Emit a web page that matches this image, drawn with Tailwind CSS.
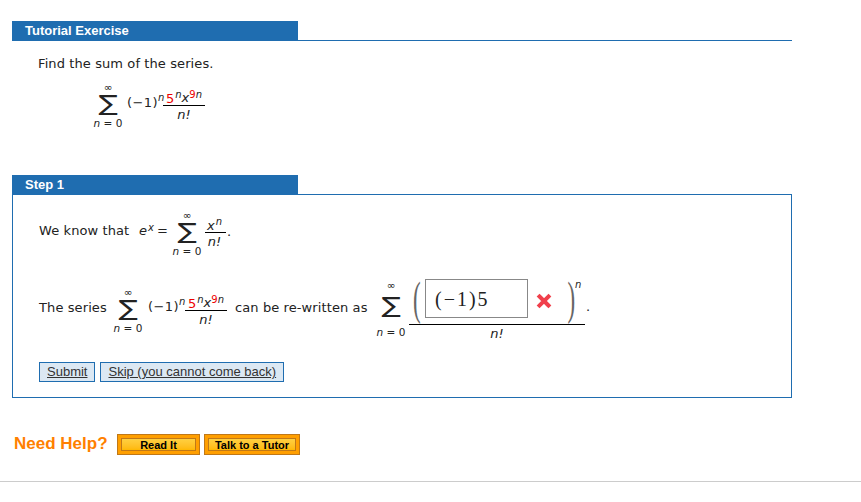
<!DOCTYPE html>
<html>
<head>
<meta charset="utf-8">
<script src="https://cdn.jsdelivr.net/npm/@tailwindcss/browser@4"></script>
</head>
<body class="bg-white w-[861px] h-[502px] overflow-hidden font-['DejaVu_Sans',sans-serif] text-[13px] text-[#222]">
<div class="h-[482px] border-b border-[#ccc] pt-[21px] pl-[12px] pr-[69px]">
  <div class="border-b border-[#1f6db0] h-[20px]">
    <div class="w-[286px] h-[20px] bg-[#1f6db0] pl-[13px] font-['Liberation_Sans',sans-serif] font-bold text-white text-[13px] leading-[20px]">Tutorial Exercise</div>
  </div>

  <div class="pl-[26px] pt-[15px] leading-[16px] tracking-[0.1px]">Find the sum of the series.</div>

  <div class="flex items-start pl-[79px] pt-[10px] h-[103px]">
    <div class="flex flex-col items-center w-[34px] text-[10.5px] leading-[10px]">
      <span class="h-[10px]">∞</span>
      <span class="text-[22px] leading-[23px] h-[22px] scale-x-[1.3]">∑</span>
      <span class="mt-[4px] h-[10px]"><i>n</i> = 0</span>
    </div>
    <span class="ml-[2px] mt-[13px] w-[31px] text-[13px] leading-[16px] tracking-[0.4px] whitespace-nowrap">(−1)</span><i class="mt-[11px] w-[6px] text-[10px] leading-[10px]">n</i>
    <div class="flex flex-col items-center w-[42px] -ml-px mt-[8px]">
      <div class="border-b border-black w-full flex justify-center items-start h-[16px] text-[13px] leading-[14px]"><span class="text-[#e00] mt-[2px]">5</span><i class="text-[10px] leading-[10px] ml-[1px]">n</i><i class="mt-[1px]">x</i><span class="text-[10px] leading-[10px] text-[#e00]">9</span><i class="text-[10px] leading-[10px]">n</i></div>
      <i class="text-[13px] leading-[18px]">n!</i>
    </div>
  </div>

  <div class="h-[20px]">
    <div class="w-[286px] h-[20px] bg-[#1f6db0] pl-[13px] font-['Liberation_Sans',sans-serif] font-bold text-white text-[13px] leading-[20px]">Step 1</div>
  </div>
  <div class="border border-[#1f6db0] -mt-px h-[204px] pl-[26px] pt-[15px]">
    <div class="flex items-start h-[70px]">
      <span class="mt-[13px] w-[100px] leading-[16px] tracking-[0.1px] whitespace-nowrap">We know that</span>
      <span class="mt-[13px] w-[31px] leading-[16px] whitespace-nowrap flex items-start"><i>e</i><i class="text-[10px] leading-[10px] ml-px">x</i><span class="ml-[3px]">=</span></span>
      <div class="flex flex-col items-center w-[34px] text-[10.5px] leading-[10px]">
        <span class="h-[10px]">∞</span>
        <span class="text-[22px] leading-[23px] h-[22px] scale-x-[1.3]">∑</span>
        <span class="mt-[4px] h-[10px]"><i>n</i> = 0</span>
      </div>
      <div class="flex flex-col items-center w-[21px] ml-[1px] mt-[7px]">
        <div class="border-b border-black w-full flex justify-center items-start h-[16px] text-[13px] leading-[14px] pr-[2px]"><i class="mt-[2px]">x</i><i class="text-[10px] leading-[10px] ml-px">n</i></div>
        <i class="text-[13px] leading-[18px] pr-[2px]">n!</i>
      </div>
      <span class="mt-[15px] ml-[1px] leading-[14px]">.</span>
    </div>

    <div class="flex items-start h-[82px]">
      <span class="mt-[20px] w-[72px] leading-[16px] tracking-[0.1px] whitespace-nowrap">The series</span>
      <div class="flex flex-col items-center w-[34px] mt-[7px] text-[10.5px] leading-[10px]">
        <span class="h-[10px]">∞</span>
        <span class="text-[22px] leading-[23px] h-[22px] scale-x-[1.3]">∑</span>
        <span class="mt-[4px] h-[10px]"><i>n</i> = 0</span>
      </div>
      <span class="ml-[3px] mt-[19px] w-[31px] text-[13px] leading-[16px] tracking-[0.4px] whitespace-nowrap">(−1)</span><i class="mt-[17px] w-[6px] text-[10px] leading-[10px]">n</i>
      <div class="flex flex-col items-center w-[42px] mt-[15px]">
        <div class="border-b border-black w-full flex justify-center items-start h-[16px] text-[13px] leading-[14px]"><span class="text-[#e00] mt-[2px]">5</span><i class="text-[10px] leading-[10px] ml-[1px]">n</i><i class="mt-[1px]">x</i><span class="text-[10px] leading-[10px] text-[#e00]">9</span><i class="text-[10px] leading-[10px]">n</i></div>
        <i class="text-[13px] leading-[18px]">n!</i>
      </div>
      <span class="mt-[20px] ml-[8px] w-[133px] leading-[16px] tracking-[0.1px] whitespace-nowrap">can be re-written as</span>
      <div class="flex flex-col items-center w-[34px] ml-[6px] text-[10.5px] leading-[10px]">
        <span class="h-[10px]">∞</span>
        <span class="mt-[4px] text-[22px] leading-[23px] h-[22px] scale-x-[1.3]">∑</span>
        <span class="mt-[11px] h-[10px]"><i>n</i> = 0</span>
      </div>
      <div class="flex flex-col w-[176px] ml-[1px]">
        <div class="border-b border-black h-[45px] flex items-start relative">
          <span class="w-[12px] ml-[1px] -mt-[4px] text-center font-['Liberation_Serif',serif] text-[46px] leading-[46px] text-[#666] scale-x-50">(</span>
          <div class="border border-[#888] w-[103px] h-[39px] ml-[3px] -mt-px flex items-center pl-[9px] font-['Liberation_Serif',serif] text-[20px] tracking-[2px] text-[#222]">(−1)5</div>
          <svg class="w-[16px] h-[16px] ml-[8px] mt-[13px]" viewBox="0 0 16 16"><path d="M3.5 3.5L12.5 12.5M12.5 3.5L3.5 12.5" stroke="#f0404c" stroke-width="4" stroke-linecap="square"/></svg>
          <span class="w-[10px] ml-[13px] -mt-[4px] text-center font-['Liberation_Serif',serif] text-[46px] leading-[46px] text-[#666] scale-x-50">)</span>
          <i class="absolute left-[166px] top-0 text-[10px] leading-[10px]">n</i>
        </div>
        <i class="text-center text-[13px] leading-[18px]">n!</i>
      </div>
      <span class="mt-[20px] ml-[1px] leading-[14px]">.</span>
    </div>

    <div class="flex gap-[5px] font-['Liberation_Sans',sans-serif] text-[13px] text-[#333]">
      <a class="h-[20px] px-[7px] bg-[#dce8f3] border border-[#1f6db0] leading-[18px] underline">Submit</a>
      <a class="h-[20px] px-[7px] bg-[#dce8f3] border border-[#1f6db0] leading-[18px] underline">Skip (you cannot come back)</a>
    </div>
  </div>

  <div class="flex items-center mt-[34px] h-[24px] pl-[2px] font-['Liberation_Sans',sans-serif]">
    <span class="font-bold text-[17px] leading-[28px] text-[#ff8000] w-[103px]">Need Help?</span>
    <div class="w-[83px] h-[21px] bg-[#ff9f00] border border-[#c07818] p-[3px] flex">
      <span class="flex-1 border border-[#c07818] bg-gradient-to-b from-[#ffd040] to-[#ffb800] text-center font-bold text-[11px] leading-[12px] text-black">Read It</span>
    </div>
    <div class="w-[96px] h-[21px] ml-[4px] bg-[#ff9f00] border border-[#c07818] p-[3px] flex">
      <span class="flex-1 border border-[#c07818] bg-gradient-to-b from-[#ffd040] to-[#ffb800] text-center font-bold text-[11px] leading-[12px] text-black whitespace-nowrap">Talk to a Tutor</span>
    </div>
  </div>
</div>
</body>
</html>
